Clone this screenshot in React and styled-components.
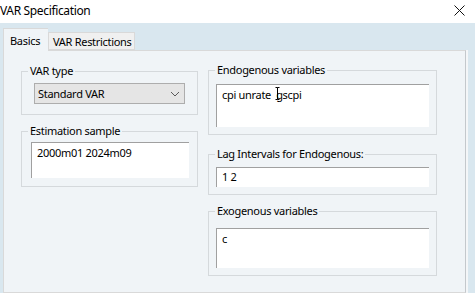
import React from "react";
import styled, { createGlobalStyle } from "styled-components";

const Global = createGlobalStyle`
  html, body { margin: 0; padding: 0; background: #ffffff; }
  body { font-family: "Noto Sans", "Open Sans", sans-serif; font-size: 11px; letter-spacing: -0.3px; color: #000; }
  * { box-sizing: border-box; }
`;

const Window = styled.div`
  width: 475px;
  height: 293px;
  display: flex;
  flex-direction: column;
  overflow: hidden;
  background: #ffffff;
`;

const TitleBar = styled.div`
  height: 23px;
  flex: none;
  display: flex;
  align-items: center;
  justify-content: space-between;
  padding: 0 10px 2px 0;
  background: #ffffff;
  font-size: 12px;
  letter-spacing: -0.35px;
`;

const Title = styled.span`
  line-height: 16px;
`;

const Body = styled.div`
  flex: 1;
  background: #d9e7ef;
  padding: 5px 0 0 3px;
  display: flex;
  flex-direction: column;
  min-height: 0;
`;

const TabRow = styled.div`
  display: flex;
  align-items: flex-end;
  height: 22px;
  flex: none;
  position: relative;
  z-index: 1;
`;

const Tab = styled.div`
  height: ${(p) => (p.$active ? "23px" : "18px")};
  margin-bottom: ${(p) => (p.$active ? "-1px" : "0")};
  padding: ${(p) => (p.$active ? "5px 6px 0 6px" : "2px 3px 0 4px")};
  width: ${(p) => p.$w}px;
  background: ${(p) => (p.$active ? "#f0f4f7" : "#f0f0f0")};
  border: 1px solid #d9d9d9;
  border-bottom: ${(p) => (p.$active ? "none" : "1px solid #d9d9d9")};
  border-right: ${(p) => (p.$active ? "none" : "1px solid #d9d9d9")};
  line-height: 14px;
  white-space: nowrap;
`;

const Panel = styled.div`
  flex: 1;
  width: 463px;
  background: #f0f4f7;
  border: 1px solid #d9d9d9;
  border-right-color: #c4c8cc;
  box-shadow: 2px 0 0 #f4f6f8;
  display: grid;
  grid-template-columns: 177px 229px;
  column-gap: 10px;
  align-content: start;
  padding: 12px 0 0 17px;
`;

const Column = styled.div`
  display: flex;
  flex-direction: column;
`;

const Group = styled.div`
  position: relative;
  border: 1px solid #d5d9dc;
  margin-top: ${(p) => p.$mt}px;
  padding: ${(p) => p.$pad};
`;

const Legend = styled.span`
  position: absolute;
  top: -8px;
  left: 6px;
  padding: 0 2px;
  background: #f0f4f7;
  line-height: 14px;
  white-space: nowrap;
`;

const Select = styled.div`
  height: 21px;
  background: #e5e5e5;
  border: 1px solid #adadad;
  display: flex;
  align-items: center;
  justify-content: space-between;
  padding: 0 4px 0 3px;
  line-height: 14px;
`;

const TextBox = styled.div`
  position: relative;
  height: ${(p) => p.$h}px;
  background: #ffffff;
  border-top: 1px solid #a0a0a0;
  border-left: 1px solid #a0a0a0;
  padding: ${(p) => p.$pt ?? 3}px 0 0 5px;
  line-height: 14px;
  white-space: pre;
`;

const Cursor = styled.svg`
  position: absolute;
  left: 58px;
  top: 2px;
`;

function Chevron() {
  return (
    <svg width="10" height="6" viewBox="0 0 10 6">
      <path d="M1 1 L5 5 L9 1" fill="none" stroke="#5a5a5a" strokeWidth="1" />
    </svg>
  );
}

function CloseIcon() {
  return (
    <svg width="11" height="11" viewBox="0 0 11 11">
      <path d="M0.5 0.5 L10.5 10.5 M10.5 0.5 L0.5 10.5" stroke="#111" strokeWidth="1" />
    </svg>
  );
}

export default function App() {
  return (
    <Window>
      <Global />
      <TitleBar>
        <Title>VAR Specification</Title>
        <CloseIcon />
      </TitleBar>
      <Body>
        <TabRow>
          <Tab $active $w={45}>Basics</Tab>
          <Tab $w={87}>VAR Restrictions</Tab>
        </TabRow>
        <Panel>
          <Column>
            <Group $mt={8} $pad="11px 12px 10px 12px">
              <Legend>VAR type</Legend>
              <Select>
                <span>Standard VAR</span>
                <Chevron />
              </Select>
            </Group>
            <Group $mt={16} $pad="10px 8px 8px 9px">
              <Legend>Estimation sample</Legend>
              <TextBox $h={36}>2000m01 2024m09</TextBox>
            </Group>
          </Column>
          <Column>
            <Group $mt={7} $pad="13px 7px 7px 7px">
              <Legend>Endogenous variables</Legend>
              <TextBox $h={43}>
                {"cpi unrate  gscpi"}
                <Cursor width="6" height="13" viewBox="0 0 6 13">
                  <path d="M0.5 0.5 L2.5 0.5 L2.5 12.5 L0.5 12.5 M2.5 0.5 L4.5 0.5 M2.5 12.5 L4.5 12.5" fill="none" stroke="#000" strokeWidth="1" />
                </Cursor>
              </TextBox>
            </Group>
            <Group $mt={19} $pad="12px 7px 7px 7px">
              <Legend>Lag Intervals for Endogenous:</Legend>
              <TextBox $h={20} $pt={2}>1 2</TextBox>
            </Group>
            <Group $mt={16} $pad="16px 7px 7px 7px">
              <Legend>Exogenous variables</Legend>
              <TextBox $h={40}>c</TextBox>
            </Group>
          </Column>
        </Panel>
      </Body>
    </Window>
  );
}
